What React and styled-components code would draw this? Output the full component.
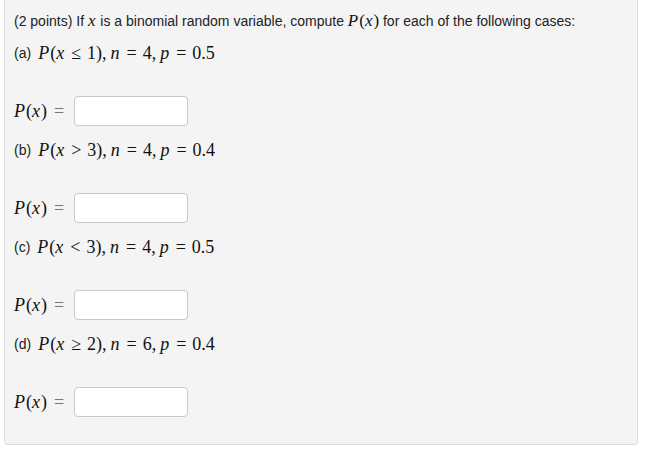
import React from 'react';
import styled, { createGlobalStyle } from 'styled-components';

const GlobalStyle = createGlobalStyle`
  html, body {
    margin: 0;
    padding: 0;
    background: #fff;
  }
  body {
    font-family: "Liberation Sans", Arial, sans-serif;
    color: #222;
  }
`;

const parts = [
  { label: '(a)', rel: '≤', k: 1, n: 4, p: '0.5' },
  { label: '(b)', rel: '>', k: 3, n: 4, p: '0.4' },
  { label: '(c)', rel: '<', k: 3, n: 4, p: '0.5' },
  { label: '(d)', rel: '≥', k: 2, n: 6, p: '0.4' },
];

function Px() {
  return (
    <MathText>
      <Var>P</Var>(<Var>x</Var>)
    </MathText>
  );
}

function App() {
  return (
    <>
      <GlobalStyle />
      <Panel>
        <Header>
          (2 points) If <MathText $small><Var>x</Var></MathText> is a binomial random variable, compute <MathText $small><Var>P</Var>(<Var>x</Var>)</MathText> for each of the following cases:
        </Header>
        {parts.map((part) => (
          <React.Fragment key={part.label}>
            <Part>
              <Label>{part.label}</Label>
              <MathText>
                <Var>P</Var>(<Var>x</Var>
                <Rel>{part.rel}</Rel>
                {part.k}),<Sep />
                <Var>n</Var>
                <Rel>=</Rel>
                {part.n},<Sep />
                <Var>p</Var>
                <Rel>=</Rel>
                {part.p}
              </MathText>
            </Part>
            <AnswerRow>
              <Px />
              <Rel $gray>=</Rel>
              <AnswerInput type="text" />
            </AnswerRow>
          </React.Fragment>
        ))}
      </Panel>
    </>
  );
}

const Panel = styled.div`
  margin: 0 10px 0 4px;
  padding: 11px 10px 24px 9px;
  background: #f4f4f4;
  border: 1px solid #dcdcdc;
  border-top: none;
  border-radius: 0 0 4px 4px;
  box-sizing: border-box;
  height: 445px;
`;

const Header = styled.div`
  font-size: 14px;
  line-height: 20px;
  height: 20px;
  white-space: nowrap;
  margin-bottom: 7px;
  color: #222;
`;

const MathText = styled.span`
  font-family: "Liberation Serif", "Times New Roman", serif;
  font-size: ${(p) => (p.$small ? '17px' : '18px')};
  color: #111;
`;

const Var = styled.em`
  font-family: "Liberation Serif", "Times New Roman", serif;
  font-style: italic;
  padding-right: 1px;
`;

const Rel = styled.span`
  display: inline-block;
  margin: 0 ${(p) => (p.$gray ? '7px' : '6px')};
  font-family: "Liberation Serif", "Times New Roman", serif;
  font-size: 18px;
  color: ${(p) => (p.$gray ? '#777' : '#111')};
`;

const Sep = styled.span`
  display: inline-block;
  width: 4px;
`;

const Part = styled.div`
  display: flex;
  align-items: center;
  height: 30px;
  margin-bottom: 28px;
`;

const Label = styled.span`
  font-size: 14px;
  margin-right: 7px;
`;

const AnswerRow = styled.div`
  display: flex;
  align-items: center;
  height: 30px;
  margin-bottom: 9px;

  &:last-child {
    margin-bottom: 0;
  }
`;

const AnswerInput = styled.input`
  width: 114px;
  height: 30px;
  box-sizing: border-box;
  margin-left: 3px;
  border: 1px solid #c8c8c8;
  border-radius: 4px;
  background: #fff;
  padding: 4px 6px;
  font-size: 14px;
`;

export default App;
